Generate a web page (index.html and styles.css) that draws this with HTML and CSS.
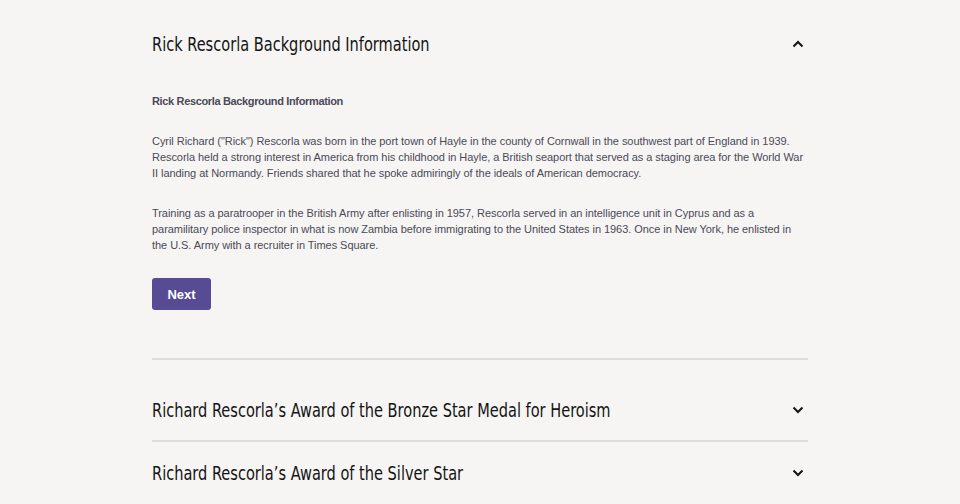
FILE: index.html
```html
<!DOCTYPE html>
<html lang="en">
<head>
<meta charset="utf-8">
<title>Rick Rescorla</title>
<link rel="stylesheet" href="styles.css">
</head>
<body>
<main class="accordion">
  <section class="item item-open">
    <div class="item-header">
      <h2 class="item-title">Rick Rescorla Background Information</h2>
      <svg class="chevron" viewBox="0 0 12 8" width="12" height="8"><path d="M1.5 6.5 L6 2 L10.5 6.5" fill="none" stroke="#141414" stroke-width="2"/></svg>
    </div>
    <div class="item-body">
      <h3 class="subtitle">Rick Rescorla Background Information</h3>
      <p class="para">Cyril Richard ("Rick") Rescorla was born in the port town of Hayle in the county of Cornwall in the southwest part of England in 1939.<br>Rescorla held a strong interest in America from his childhood in Hayle, a British seaport that served as a staging area for the World War<br>II landing at Normandy. Friends shared that he spoke admiringly of the ideals of American democracy.</p>
      <p class="para">Training as a paratrooper in the British Army after enlisting in 1957, Rescorla served in an intelligence unit in Cyprus and as a<br>paramilitary police inspector in what is now Zambia before immigrating to the United States in 1963. Once in New York, he enlisted in<br>the U.S. Army with a recruiter in Times Square.</p>
      <button class="btn-next" type="button">Next</button>
    </div>
  </section>
  <section class="item item-second">
    <div class="item-header">
      <h2 class="item-title">Richard Rescorla’s Award of the Bronze Star Medal for Heroism</h2>
      <svg class="chevron" viewBox="0 0 12 8" width="12" height="8"><path d="M1.5 1.5 L6 6 L10.5 1.5" fill="none" stroke="#141414" stroke-width="2"/></svg>
    </div>
  </section>
  <section class="item item-last">
    <div class="item-header">
      <h2 class="item-title">Richard Rescorla’s Award of the Silver Star</h2>
      <svg class="chevron" viewBox="0 0 12 8" width="12" height="8"><path d="M1.5 1.5 L6 6 L10.5 1.5" fill="none" stroke="#141414" stroke-width="2"/></svg>
    </div>
  </section>
</main>
</body>
</html>
```
FILE: styles.css
```css
html, body {
  margin: 0;
  padding: 0;
  background: #f6f5f3;
}
body {
  font-family: "Liberation Sans", Arial, sans-serif;
}
.accordion {
  width: 656px;
  margin: 0 auto;
}
.item {
  border-bottom: 2px solid #dedddb;
}
.item-last {
  border-bottom: none;
}
.item-header {
  display: flex;
  align-items: center;
  justify-content: space-between;
  padding: 30px 0 0;
}
.item-second .item-header {
  padding: 36px 0 16px;
}
.item-last .item-header {
  padding: 17px 0;
}
.item-title {
  margin: 0;
  font-family: "DejaVu Sans Condensed", "Liberation Sans", sans-serif;
  font-weight: 400;
  font-size: 20px;
  line-height: 28px;
  color: #141414;
  white-space: nowrap;
  transform: scaleX(0.81);
  transform-origin: left center;
}
.chevron {
  display: block;
  flex: none;
  margin-right: 4px;
}
.item-body {
  padding: 35px 0 48px;
}
.subtitle {
  margin: 0 0 24px;
  font-size: 11px;
  line-height: 16px;
  font-weight: 700;
  letter-spacing: -0.35px;
  color: #4a4a58;
}
.para {
  margin: 0 0 24px;
  font-size: 11px;
  line-height: 16px;
  letter-spacing: -0.05px;
  white-space: nowrap;
  color: #4a4a58;
}
.btn-next {
  display: block;
  margin-top: 25px;
  width: 59px;
  height: 32px;
  padding: 0;
  border: none;
  border-radius: 3px;
  background: #574c93;
  color: #ffffff;
  font-family: "Liberation Sans", Arial, sans-serif;
  font-weight: 700;
  font-size: 13px;
}
```
